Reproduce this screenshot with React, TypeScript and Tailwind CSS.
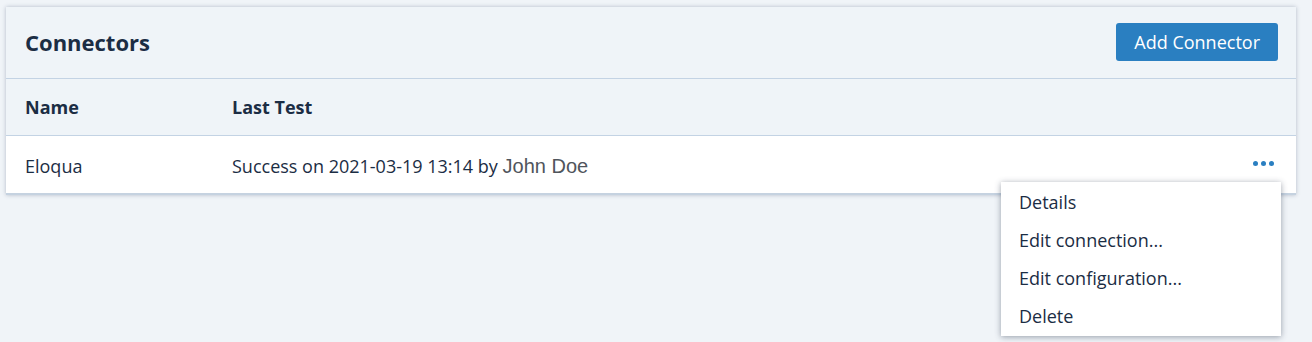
const menuItems = ['Details', 'Edit connection...', 'Edit configuration...', 'Delete'];

export default function App() {
  return (
    <div
      className="h-[342px] w-full bg-[#f0f4f8] pl-[6px] pr-[16px] pt-[7px] text-[#1b2d44]"
      style={{ fontFamily: '"Open Sans", "Noto Sans", sans-serif' }}
    >
      <div className="relative border-b-2 border-b-[#c5d2e0] bg-white shadow-[0_0_4px_rgba(60,80,110,0.35)]">
        {/* Title bar */}
        <div className="flex h-[72px] items-center justify-between border-b border-[#c3d3e4] bg-[#eff4f8] pl-[19px] pr-[18px]">
          <h1 className="text-[22px] font-bold">Connectors</h1>
          <button className="mb-[1px] h-[38px] rounded-[3px] bg-[#2a7fc1] px-[18px] text-[18px] text-white">
            Add Connector
          </button>
        </div>

        {/* Column headers */}
        <div className="flex h-[57px] items-center border-b border-[#c3d3e4] bg-[#eff4f8] pl-[19px] pt-[1px] text-[18px] font-bold">
          <div className="w-[207px]">Name</div>
          <div>Last Test</div>
        </div>

        {/* Row */}
        <div className="flex h-[57px] items-center pl-[19px] pr-[22px] text-[18px]">
          <div className="w-[207px] pt-[3px]">Eloqua</div>
          <div className="flex-1 pt-[3px]">
            Success on 2021-03-19 13:14 by{' '}
            <span
              className="text-[20px] text-[#50555c]"
              style={{ fontFamily: '"Liberation Sans", Arial, sans-serif' }}
            >
              John Doe
            </span>
          </div>
          <button className="mb-[2px] flex items-center gap-[3px]" aria-label="More actions">
            <span className="h-[5px] w-[5px] rounded-full bg-[#2a7fc1]" />
            <span className="h-[5px] w-[5px] rounded-full bg-[#2a7fc1]" />
            <span className="h-[5px] w-[5px] rounded-full bg-[#2a7fc1]" />
          </button>
        </div>

        {/* Dropdown menu */}
        <div className="absolute left-[995px] top-[175px] z-10 w-[280px] bg-white pt-[1px] shadow-[0_1px_6px_rgba(40,50,70,0.45)]">
          {menuItems.map((item) => (
            <div key={item} className="flex h-[38.25px] items-center px-[18px] text-[18px]">
              {item}
            </div>
          ))}
        </div>
      </div>
    </div>
  );
}
